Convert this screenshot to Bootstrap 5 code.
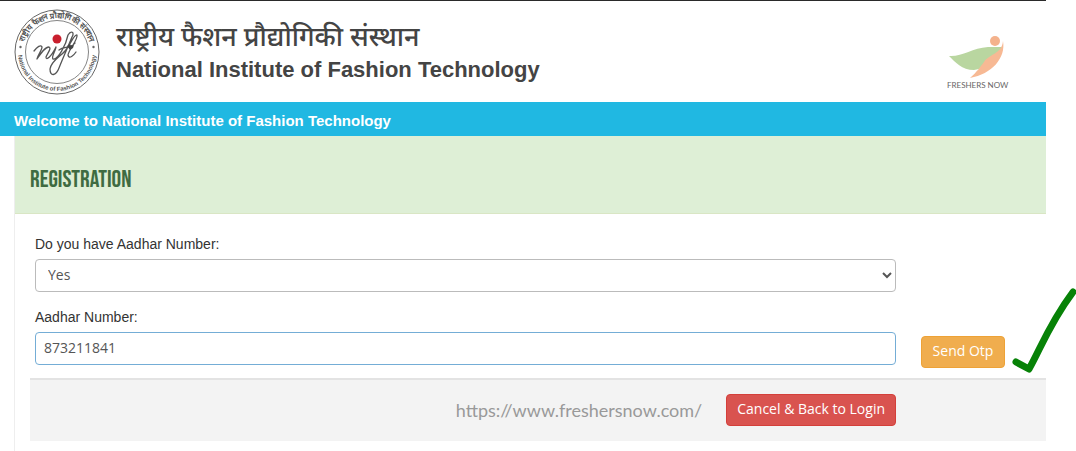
<!DOCTYPE html>
<html lang="en">
<head>
<meta charset="utf-8">
<meta name="viewport" content="width=device-width, initial-scale=1">
<title>NIFT Registration</title>
<link href="https://cdn.jsdelivr.net/npm/bootstrap@5.3.0/dist/css/bootstrap.min.css" rel="stylesheet">
<style>
body{font-family:"Open Sans","Noto Sans",sans-serif;font-size:14px;line-height:20px;color:#444;background:#fff}
.page-shell{padding-right:30px}
.site-head{height:102px;border-top:1px solid #2a2a2a;padding:8px 36px 0 14px}
.seal{width:86px;height:86px}
.inst-name{font-family:"Liberation Sans",Arial,sans-serif;color:#444}
.inst-hi{font-family:"Noto Sans Devanagari","Noto Sans",sans-serif;font-size:27px;line-height:32px;margin-top:15px;font-weight:500}
.inst-en{font-size:22px;line-height:28px;font-weight:700}
.fresh-logo{width:64px;height:56px;margin-top:26px}
.welcome{background:#20b8e2;color:#fff;font:700 15px/34px "Liberation Sans",Arial,sans-serif;height:34px;padding-left:14px;padding-top:2px}
.reg-panel{margin-left:14px;border-left:1px solid #eee;min-height:315px}
.reg-head{background:#deefd6;border-bottom:1px solid #d9e6c4;height:78px;padding:10px 0 0 15px}
.reg-head h1{font:400 24px/24px "Bebas Neue","Liberation Sans",sans-serif;color:#3f6b42}
.reg-form{padding-top:20px}
.field-row{padding:0 41px 0 20px;gap:25px}
.side-cell{width:84px}
.reg-form label{font:14px/20px "Liberation Sans",Arial,sans-serif;color:#333;margin-bottom:5px}
.reg-form .form-control{height:33px;border:1px solid #bbb;border-radius:4px;font-size:14px;line-height:20px;color:#555;padding:4px 8px}
.reg-form select.form-control{appearance:auto;padding:4px 2px 6px 8px}
.reg-form input.form-control{border-color:#74add6;padding-bottom:6px}
.field-gap{margin-bottom:15px}
.btn-flat{font-size:14px;line-height:20px;height:32px;padding:4px 10px 6px;border-radius:4px;color:#fff;white-space:nowrap}
.btn-otp{background:#f0ad4e;border-color:#eea236}
.btn-cancel{background:#d9534f;border-color:#d43f3a}
.otp-cell{padding-top:29px}
.tick{left:90px;top:-21px;width:66px;height:90px}
.form-foot{background:#f3f3f3;border-top:2px solid #e3e3e3;margin:10px 0 0 15px;height:63px;padding:14px 150px 0 0;gap:24px}
.form-foot a{font:18px/32px Lato,sans-serif;color:#999}
</style>
</head>
<body>
<div class="page-shell">
  <header class="site-head d-flex align-items-start">
    <svg class="seal flex-shrink-0" viewBox="0 0 86 86" role="img" aria-label="NIFT seal">
      <defs>
        <path id="arcTop" d="M9 43a34 34 0 0 1 68 0"/>
        <path id="arcBottom" d="M4 43a39 39 0 0 0 78 0"/>
      </defs>
      <g fill="none" stroke="#666">
        <circle cx="43" cy="43" r="42"/><circle cx="43" cy="43" r="31.500" stroke-width=".8"/>
        <path stroke="#555" stroke-width="1.300" stroke-linecap="round" stroke-linejoin="round" d="M20 42C23 38 27 35 28 38C28 41 24 46 23 50C27 44 31 38 35 38C38 39 33 45 32 48C32 52 37 48 42 38C41 43 37 48 39 50C44 51 52 36 54 26C57 21 61 23 58 28C53 40 49 49 45 59C42 67 36 68 36 60C37 52 46 48 51 42C57 35 60 25 63 26C64 31 55 40 54 46C55 51 60 46 62 43M45 41C50 37 56 40 61 34"/>
      </g>
      <path fill="#444" d="M53 37l3-2 1 2 3-1-1 3-3 2z"/>
      <circle cx="43" cy="30" r="4.500" fill="#c9202e"/>
      <g fill="#666"><circle cx="6.500" cy="38" r="1.200"/><circle cx="79.500" cy="38" r="1.200"/></g>
      <g fill="#555" font-family="'Liberation Sans',sans-serif" text-anchor="middle">
        <text font-size="8" font-weight="700"><textPath href="#arcTop" startOffset="50%">राष्ट्रीय फैशन प्रौद्योगिकी संस्थान</textPath></text>
        <text font-size="6" font-weight="700"><textPath href="#arcBottom" startOffset="50%">National Institute of Fashion Technology</textPath></text>
      </g>
    </svg>
    <div class="inst-name ms-3 flex-grow-1">
      <div class="inst-hi" lang="hi">राष्ट्रीय फैशन प्रौद्योगिकी संस्थान</div>
      <div class="inst-en">National Institute of Fashion Technology</div>
    </div>
    <svg class="fresh-logo flex-shrink-0" viewBox="0 0 64 56" role="img" aria-label="Freshers Now">
      <path fill="#b9d6a0" d="M3 21C16 22 26 13 42 12L56 12C51 25 38 34 28 35C16 35 9 27 3 21Z"/>
      <path fill="#f7b994" d="M57 6C60 23 46 39 24 43C31 37 34 32 38 27C43 19 56 19 57 6Z"/>
      <circle cx="49" cy="6" r="5" fill="#f4b28c"/>
      <text x="1" y="53" font-family="Lato,sans-serif" font-size="8" fill="#666">FRESHERS NOW</text>
    </svg>
  </header>
  <div class="welcome">Welcome to National Institute of Fashion Technology</div>
  <main class="reg-panel">
    <div class="reg-head d-flex align-items-center"><h1 class="m-0">REGISTRATION</h1></div>
    <form class="reg-form">
      <div class="field-row field-gap d-flex">
        <div class="flex-grow-1">
          <label class="d-block" for="hasAadhar">Do you have Aadhar Number:</label>
          <select class="form-control" id="hasAadhar"><option>Yes</option><option>No</option></select>
        </div>
        <div class="side-cell"></div>
      </div>
      <div class="field-row d-flex">
        <div class="flex-grow-1">
          <label class="d-block" for="aadhar">Aadhar Number:</label>
          <input class="form-control" id="aadhar" type="text" value="873211841">
        </div>
        <div class="side-cell otp-cell position-relative">
          <button type="button" class="btn btn-flat btn-otp w-100">Send Otp</button>
          <svg class="tick position-absolute" viewBox="0 0 66 90" aria-hidden="true"><path fill="none" stroke="#078207" stroke-width="7" stroke-linecap="round" stroke-linejoin="round" d="M5 76L18 83C29 64 38 38 62 6"/></svg>
        </div>
      </div>
      <div class="form-foot d-flex justify-content-end align-items-start">
        <a class="text-decoration-none" href="https://www.freshersnow.com/">https://www.freshersnow.com/</a>
        <button type="button" class="btn btn-flat btn-cancel">Cancel &amp; Back to Login</button>
      </div>
    </form>
  </main>
</div>
<script src="https://cdn.jsdelivr.net/npm/bootstrap@5.3.0/dist/js/bootstrap.bundle.min.js"></script>
</body>
</html>
